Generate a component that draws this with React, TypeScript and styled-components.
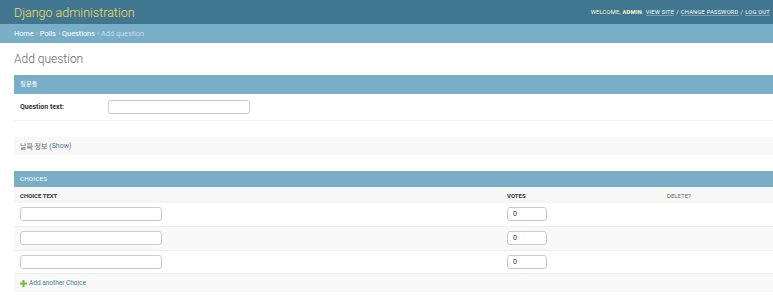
import styled, { createGlobalStyle } from "styled-components";

const GlobalStyle = createGlobalStyle`
  body {
    margin: 0;
    font-family: Roboto, "Noto Sans CJK KR", "Liberation Sans", sans-serif;
    color: #333;
    background: #fff;
  }
`;

const Header = styled.header`
  height: 24px;
  padding: 0 3px 0 14px;
  display: flex;
  align-items: center;
  justify-content: space-between;
  background: #417690;
`;

const Branding = styled.div`
  font-size: 12.5px;
  font-weight: 300;
  color: #f5dd5d;
`;

const UserTools = styled.div`
  font-size: 5.7px;
  letter-spacing: 0.25px;
  text-transform: uppercase;
  color: #ffc;
  display: flex;
  gap: 2px;
  align-items: center;
`;

const ToolLink = styled.a`
  color: #fff;
  text-decoration: none;
  border-bottom: 1px solid rgba(255, 255, 255, 0.3);
`;

const Breadcrumbs = styled.nav`
  height: 19px;
  padding-left: 14px;
  display: flex;
  align-items: center;
  gap: 2px;
  background: #79aec8;
  color: #c4dce8;
  font-size: 7.3px;
`;

const Crumb = styled.a`
  color: #fff;
  text-decoration: none;
`;

const Content = styled.main`
  padding: 8px 0 0 14px;
`;

const Title = styled.h1`
  margin: 0 0 8px;
  font-size: 12px;
  line-height: 16px;
  font-weight: 300;
  color: #666;
`;

const Module = styled.section<{ $gap?: number }>`
  margin-bottom: ${(p) => p.$gap ?? 16}px;
`;

const Caption = styled.h2<{ $h?: number }>`
  margin: 0;
  height: ${(p) => p.$h ?? 19}px;
  line-height: ${(p) => p.$h ?? 19}px;
  padding-left: 6px;
  background: #79aec8;
  color: #fff;
  font-size: 6.2px;
  font-weight: 400;
  letter-spacing: 0.2px;
`;

const FormRow = styled.div`
  height: 26px;
  padding-left: 6px;
  display: flex;
  align-items: center;
  border-bottom: 1px solid #eee;
`;

const Label = styled.label`
  width: 88px;
  font-size: 7px;
  font-weight: 700;
  color: #333;
`;

const Input = styled.input<{ $w: number }>`
  box-sizing: border-box;
  display: block;
  width: ${(p) => p.$w}px;
  height: 14px;
  padding: 0 5px;
  border: 1px solid #ccc;
  border-radius: 3px;
  font-family: inherit;
  font-size: 7px;
  color: #333;
  background: #fff;
`;

const Collapsed = styled.div`
  height: 18px;
  padding-left: 6px;
  display: flex;
  align-items: center;
  background: #f8f8f8;
  font-size: 7px;
  color: #666;
`;

const ShowLink = styled.a`
  color: #447e9b;
  text-decoration: none;
`;

const Table = styled.table`
  width: 100%;
  border-collapse: collapse;
  table-layout: fixed;
`;

const Th = styled.th<{ $w?: number; $muted?: boolean }>`
  width: ${(p) => (p.$w ? `${p.$w}px` : "auto")};
  height: 16px;
  padding: 0 6px;
  text-align: left;
  background: #f6f6f6;
  font-size: 6px;
  font-weight: ${(p) => (p.$muted ? 400 : 700)};
  color: ${(p) => (p.$muted ? "#666" : "#333")};
  text-transform: uppercase;
`;

const Row = styled.tr<{ $alt?: boolean }>`
  background: ${(p) => (p.$alt ? "#f9f9f9" : "#fff")};
  border-bottom: 1px solid #eee;
`;

const Td = styled.td`
  height: 23.6px;
  box-sizing: border-box;
  padding: 4px 6px 0;
  vertical-align: top;
`;

const AddRow = styled.div`
  height: 18px;
  padding-left: 6px;
  display: flex;
  align-items: center;
  gap: 2px;
  background: #f8f8f8;
  font-size: 6.5px;
`;

const AddLink = styled.a`
  color: #447e9b;
  text-decoration: none;
`;

const PlusIcon = () => (
  <svg width="7" height="7" viewBox="0 0 14 14">
    <path fill="#70bf2b" d="M5 0h4v5h5v4H9v5H5V9H0V5h5z" />
  </svg>
);

export default function App() {
  const choices = [0, 1, 2];
  return (
    <>
      <GlobalStyle />
      <Header>
        <Branding>Django administration</Branding>
        <UserTools>
          <span>
            Welcome, <strong>admin</strong>.
          </span>
          <ToolLink href="#">View site</ToolLink>/
          <ToolLink href="#">Change password</ToolLink>/
          <ToolLink href="#">Log out</ToolLink>
        </UserTools>
      </Header>
      <Breadcrumbs>
        <Crumb href="#">Home</Crumb>›<Crumb href="#">Polls</Crumb>›
        <Crumb href="#">Questions</Crumb>›<span>Add question</span>
      </Breadcrumbs>
      <Content>
        <Title>Add question</Title>
        <Module>
          <Caption>질문들</Caption>
          <FormRow>
            <Label>Question text:</Label>
            <Input $w={142} type="text" />
          </FormRow>
        </Module>
        <Module>
          <Collapsed>
            날짜 정보&nbsp;(<ShowLink href="#">Show</ShowLink>)
          </Collapsed>
        </Module>
        <Module $gap={0}>
          <Caption $h={16}>CHOICES</Caption>
          <Table>
            <thead>
              <tr>
                <Th $w={475}>Choice text</Th>
                <Th $w={148}>Votes</Th>
                <Th $muted>Delete?</Th>
              </tr>
            </thead>
            <tbody>
              {choices.map((i) => (
                <Row key={i} $alt={i === 1}>
                  <Td>
                    <Input $w={142} type="text" />
                  </Td>
                  <Td>
                    <Input $w={40} type="text" defaultValue="0" />
                  </Td>
                  <Td />
                </Row>
              ))}
            </tbody>
          </Table>
          <AddRow>
            <PlusIcon />
            <AddLink href="#">Add another Choice</AddLink>
          </AddRow>
        </Module>
      </Content>
    </>
  );
}
